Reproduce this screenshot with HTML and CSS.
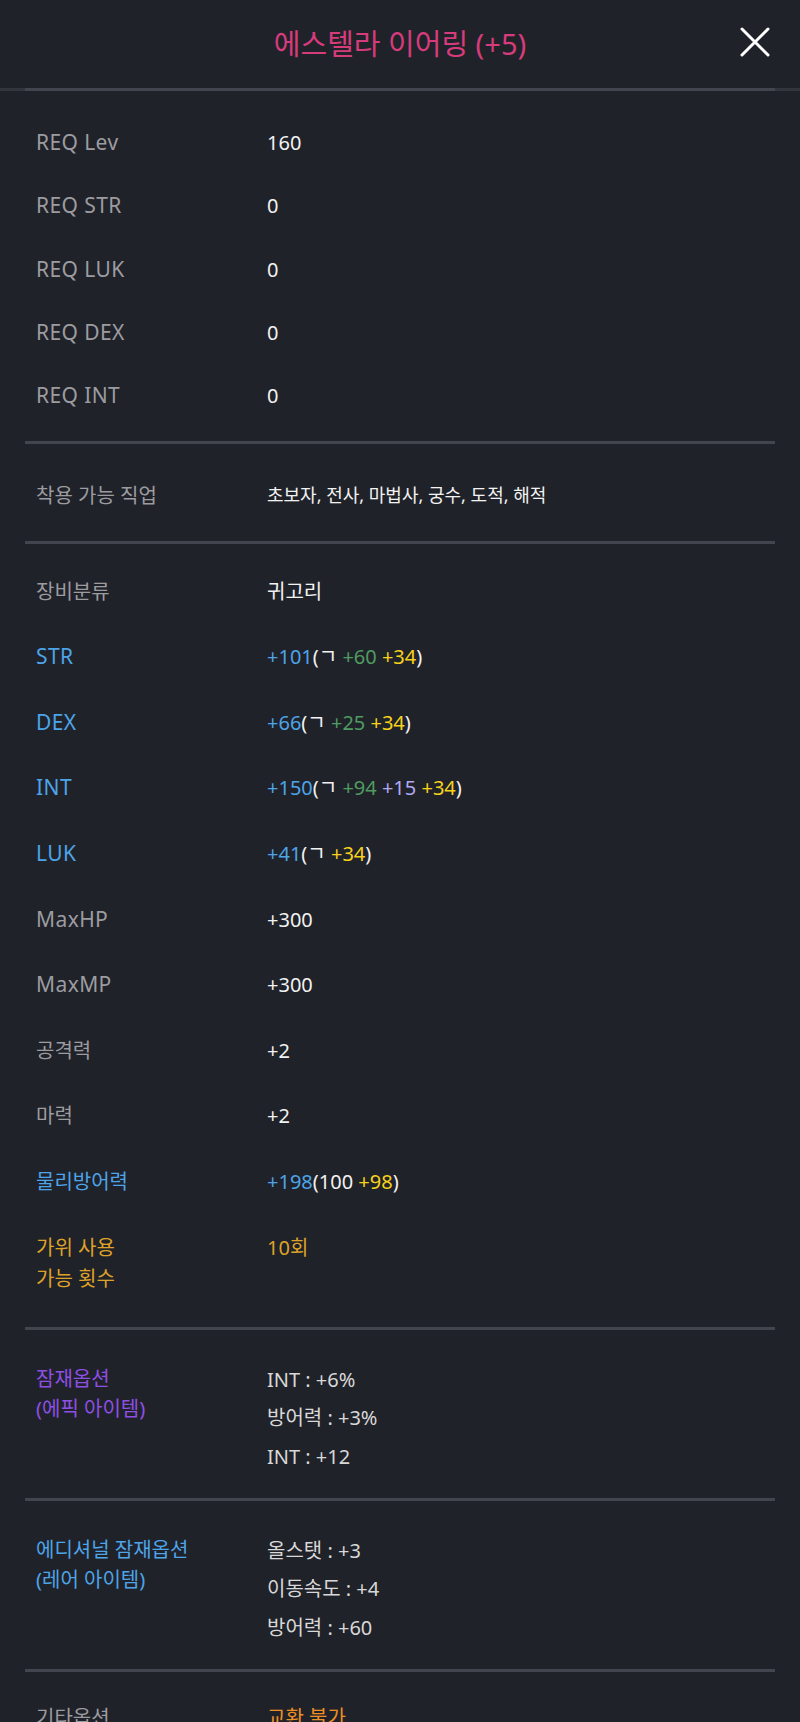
FILE: index.html
```html
<!DOCTYPE html>
<html lang="ko">
<head>
<meta charset="utf-8">
<title>에스텔라 이어링 (+5)</title>
<link rel="stylesheet" href="styles.css">
</head>
<body>
<header class="header">
  <div class="spacer"></div>
  <h1 class="title">에스텔라 이어링 (+5)</h1>
  <button class="close" aria-label="닫기">
    <svg width="30" height="30" viewBox="0 0 30 30"><path d="M2 2 L28 28 M28 2 L2 28" stroke="#ffffff" stroke-width="3" stroke-linecap="round" fill="none"/></svg>
  </button>
</header>
<main class="content">
  <section class="sec sec-req">
    <div class="row"><div class="label latin">REQ Lev</div><div class="value">160</div></div>
    <div class="row"><div class="label latin">REQ STR</div><div class="value">0</div></div>
    <div class="row"><div class="label latin">REQ LUK</div><div class="value">0</div></div>
    <div class="row"><div class="label latin">REQ DEX</div><div class="value">0</div></div>
    <div class="row"><div class="label latin">REQ INT</div><div class="value">0</div></div>
  </section>
  <section class="sec sec-job">
    <div class="row"><div class="label">착용 가능 직업</div><div class="value small">초보자, 전사, 마법사, 궁수, 도적, 해적</div></div>
  </section>
  <section class="sec sec-stat">
    <div class="row"><div class="label">장비분류</div><div class="value">귀고리</div></div>
    <div class="row"><div class="label latin blue">STR</div><div class="value"><span class="blue">+101</span>(ㄱ <span class="green">+60</span> <span class="yellow">+34</span>)</div></div>
    <div class="row"><div class="label latin blue">DEX</div><div class="value"><span class="blue">+66</span>(ㄱ <span class="green">+25</span> <span class="yellow">+34</span>)</div></div>
    <div class="row"><div class="label latin blue">INT</div><div class="value"><span class="blue">+150</span>(ㄱ <span class="green">+94</span> <span class="lavender">+15</span> <span class="yellow">+34</span>)</div></div>
    <div class="row"><div class="label latin blue">LUK</div><div class="value"><span class="blue">+41</span>(ㄱ <span class="yellow">+34</span>)</div></div>
    <div class="row"><div class="label latin">MaxHP</div><div class="value">+300</div></div>
    <div class="row"><div class="label latin">MaxMP</div><div class="value">+300</div></div>
    <div class="row"><div class="label">공격력</div><div class="value">+2</div></div>
    <div class="row"><div class="label">마력</div><div class="value">+2</div></div>
    <div class="row"><div class="label blue">물리방어력</div><div class="value"><span class="blue">+198</span>(100 <span class="yellow">+98</span>)</div></div>
    <div class="row"><div class="label gold">가위 사용<br>가능 횟수</div><div class="value gold">10회</div></div>
  </section>
  <section class="sec sec-pot">
    <div class="row"><div class="label purple">잠재옵션<br>(에픽 아이템)</div>
      <div class="value opts"><div>INT : +6%</div><div>방어력 : +3%</div><div>INT : +12</div></div></div>
  </section>
  <section class="sec sec-pot">
    <div class="row"><div class="label blue">에디셔널 잠재옵션<br>(레어 아이템)</div>
      <div class="value opts"><div>올스탯 : +3</div><div>이동속도 : +4</div><div>방어력 : +60</div></div></div>
  </section>
  <section class="sec sec-etc">
    <div class="row"><div class="label">기타옵션</div><div class="value orange">교환 불가</div></div>
  </section>
</main>
</body>
</html>
```
FILE: styles.css
```css
html, body {
  margin: 0;
  padding: 0;
  background: #202229;
}
body {
  font-family: "Noto Sans", "Noto Sans CJK KR", sans-serif;
  font-size: 20px;
  color: #f2f2f2;
  height: 1722px;
  overflow: hidden;
}
.header {
  height: 88px;
  display: grid;
  grid-template-columns: 1fr auto 1fr;
  align-items: center;
  box-shadow: 0 3px 0 #33353d;
}
.title {
  margin: 0;
  font-size: 29px;
  font-weight: 400;
  color: #d63b7b;
  line-height: 1;
  padding-bottom: 2px;
}
.close {
  justify-self: end;
  margin-right: 30px;
  background: none;
  border: 0;
  padding: 0;
  width: 30px;
  height: 30px;
  margin-top: -4px;
}
.close svg { display: block; }
.content {
  margin: 0 25px;
}
.sec {
  border-top: 3px solid #43454e;
}
.row {
  display: grid;
  grid-template-columns: 231px 1fr;
  padding-left: 11px;
}
.label {
  color: #9c9ca0;
}
.latin {
  font-size: 21px;
  letter-spacing: 0.4px;
}
.value {
  color: #f2f2f2;
}
.small {
  font-size: 18px;
}
.sec-req { padding: 20px 0 14px; }
.sec-req .row { padding-top: 16px; padding-bottom: 16px; line-height: 31.25px; }
.sec-job { padding: 19.5px 0 13.5px; }
.sec-job .row { padding-top: 16px; padding-bottom: 16px; line-height: 31.25px; }
.sec-stat { padding: 15.2px 0 14.8px; }
.sec-stat .row { padding-top: 17px; padding-bottom: 17px; line-height: 31.6px; }
.sec-pot { padding: 31px 0 21.5px; }
.sec-pot .label { line-height: 30px; margin-top: 3px; }
.opts { line-height: 38.5px; color: #d8d8d8; }
.sec-etc { padding: 30px 0 20px; }
.sec-etc .row { line-height: 31px; }
.blue { color: #4da4e8; }
.green { color: #4f9b60; }
.yellow { color: #f6d21c; }
.lavender { color: #b2a7f2; }
.gold { color: #dfa228; }
.purple { color: #8e4fe4; }
.orange { color: #ec8f26; }
```
